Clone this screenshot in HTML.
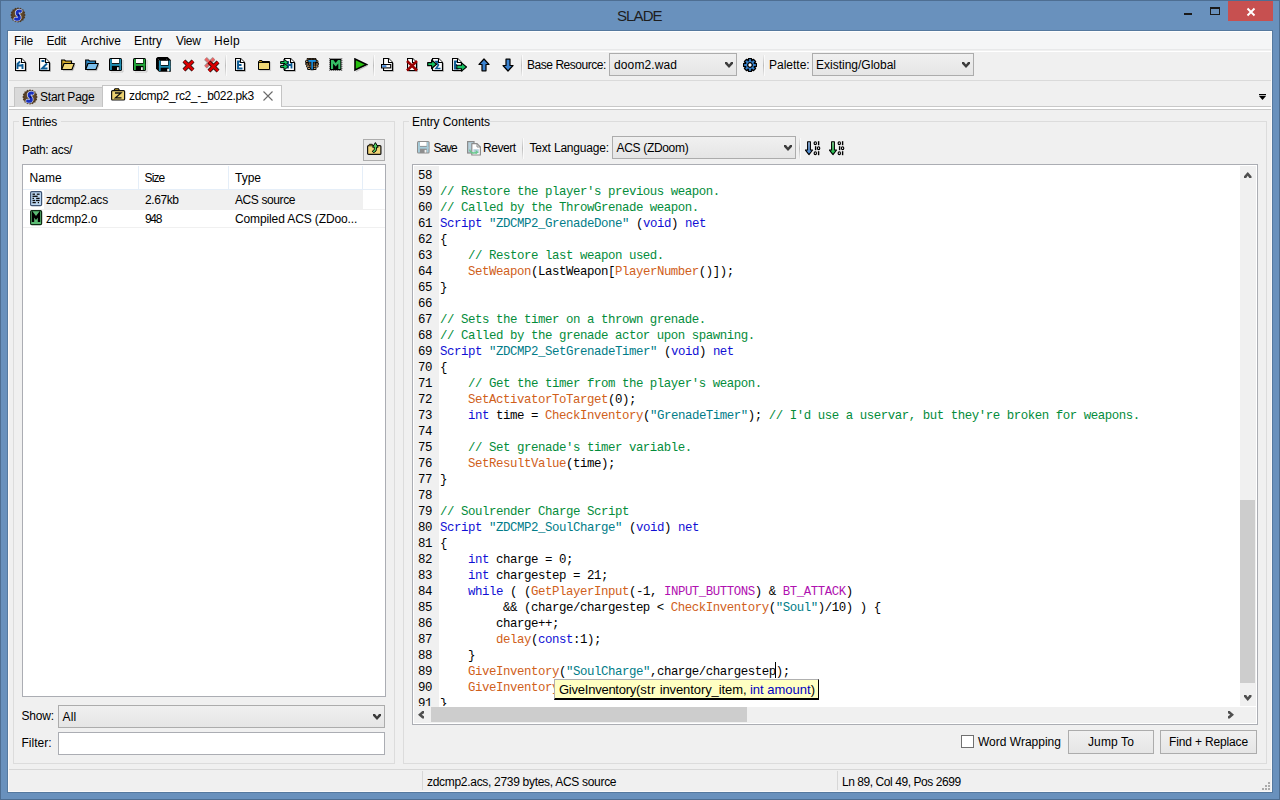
<!DOCTYPE html>
<html><head><meta charset="utf-8">
<style>
*{box-sizing:border-box;margin:0;padding:0}
html,body{width:1280px;height:800px;overflow:hidden;background:#6991BD;font-family:"Liberation Sans",sans-serif;font-size:12px;color:#000}
.a{position:absolute}
.t{position:absolute;white-space:pre;line-height:14px}
#win{position:absolute;left:0;top:0;width:1280px;height:800px;background:#6991BD;border:1px solid #4E6E92}
#client{position:absolute;left:8px;top:31px;width:1264px;height:761px;background:#F0F0F0;overflow:hidden}
.sep{position:absolute;width:1px;background:linear-gradient(rgba(190,190,190,0.1),#BDBDBD 50%,rgba(190,190,190,0.1));box-shadow:1px 0 0 #FAFAFA}
.ssep{position:absolute;width:1px;background:#D7D7D7}
.combo{position:absolute;border:1px solid #ACACAC;background:linear-gradient(#F0F0F0,#E5E5E5)}
.combo .arr{position:absolute;right:3px;top:50%;margin-top:-3px;width:8px;height:6px}
.gb{position:absolute;border:1px solid #DCDCDC}
.btn{position:absolute;border:1px solid #ACACAC;background:linear-gradient(#F0F0F0,#E5E5E5);text-align:center}
.code{position:absolute;left:440px;font-family:"Liberation Mono",monospace;font-size:12.4px;letter-spacing:-0.44px;line-height:16px;white-space:pre;margin-top:2px}
.ln{position:absolute;left:418px;font-family:"Liberation Mono",monospace;font-size:12.4px;letter-spacing:-0.44px;line-height:16px;white-space:pre;margin-top:2px}
.c{color:#038C3A}.k{color:#1010D4}.f{color:#D0601A}.s{color:#007C88}.m{color:#B010B0}
</style></head><body>
<div id="win"></div>
<!-- title -->
<div class="t" style="left:617px;top:8px;font-size:15px;line-height:16px;color:#1E1E1E;letter-spacing:-0.9px">SLADE</div>
<div class="a" style="left:1228px;top:1px;width:45px;height:20px;background:#C75050"></div>
<svg class="a" style="left:1246px;top:7px" width="10" height="10"><path d="M1.5 1.5 L8.5 8.5 M8.5 1.5 L1.5 8.5" stroke="#fff" stroke-width="1.9"/></svg>
<div class="a" style="left:1210px;top:7px;width:10px;height:8px;border:1px solid #1a1a1a;border-top-width:2px"></div>
<div class="a" style="left:1184px;top:13px;width:8px;height:2px;background:#1a1a1a"></div>

<div id="client"></div>
<!-- menubar -->
<div class="a" style="left:8px;top:31px;width:1264px;height:19px;background:#F5F6F7"></div>
<div class="a" style="left:8px;top:49px;width:1264px;height:1px;background:#E8E9EA"></div>
<div class="t" style="left:14px;top:34px;letter-spacing:-0.06px">File</div>
<div class="t" style="left:46.5px;top:34px;letter-spacing:-0.26px">Edit</div>
<div class="t" style="left:81px;top:34px">Archive</div>
<div class="t" style="left:134px;top:34px">Entry</div>
<div class="t" style="left:176px;top:34px;letter-spacing:-0.33px">View</div>
<div class="t" style="left:214px;top:34px;letter-spacing:0.33px">Help</div>
<!-- toolbar -->
<div class="a" style="left:8px;top:51px;width:1264px;height:1px;background:#FFFFFF"></div>
<div class="a" style="left:8px;top:80px;width:1264px;height:1px;background:#DADADA"></div>
<div class="sep" style="left:225px;top:55px;height:21px"></div>
<div class="sep" style="left:373px;top:55px;height:21px"></div>
<div class="sep" style="left:521px;top:55px;height:21px"></div>
<div class="sep" style="left:763px;top:55px;height:21px"></div>

<div class="t" style="left:527px;top:58px;letter-spacing:-0.46px">Base Resource:</div>
<div class="combo" style="left:609px;top:53px;width:128px;height:23px"><div class="t" style="left:4px;top:4px;letter-spacing:0.12px">doom2.wad</div><svg class="arr" viewBox="0 0 8 6"><path d="M0 0 H2 L4 2.6 L6 0 H8 V1.8 L4 6 L0 1.8 Z" fill="#3C3C3C"/></svg></div>
<div class="t" style="left:769px;top:58px">Palette:</div>
<div class="combo" style="left:812px;top:53px;width:162px;height:23px"><div class="t" style="left:3px;top:4px">Existing/Global</div><svg class="arr" viewBox="0 0 8 6"><path d="M0 0 H2 L4 2.6 L6 0 H8 V1.8 L4 6 L0 1.8 Z" fill="#3C3C3C"/></svg></div>

<!-- tabs -->
<div class="a" style="left:8px;top:106px;width:1264px;height:1px;background:#C8C8C8"></div>
<div class="a" style="left:8px;top:107px;width:1264px;height:2px;background:#FFFFFF"></div>
<div class="a" style="left:8px;top:109px;width:1264px;height:1px;background:#C8C8C8"></div>
<div class="a" style="left:14px;top:87px;width:89px;height:20px;background:#D9D9D9;border:1px solid #C4C4C4;border-bottom:none"></div>
<div class="t" style="left:40px;top:90px;letter-spacing:-0.22px">Start Page</div>
<div class="a" style="left:102px;top:85px;width:180px;height:22px;background:#FFFFFF;border:1px solid #C4C4C4;border-bottom:none"></div>
<div class="t" style="left:129px;top:89px;letter-spacing:-0.35px">zdcmp2_rc2_-_b022.pk3</div>
<svg class="a" style="left:263px;top:91px" width="10" height="10"><path d="M0.5 0.5 L9.5 9.5 M9.5 0.5 L0.5 9.5" stroke="#6A6A6A" stroke-width="1.1"/></svg>
<svg class="a" style="left:1259px;top:94px" width="7" height="6"><path d="M0 0 H7 V1.2 H0 Z M0 2 H7 L3.5 6 Z" fill="#000"/></svg>

<!-- left group -->
<div class="gb" style="left:13px;top:121px;width:382px;height:643px"></div>
<div class="a" style="left:19px;top:115px;width:42px;height:12px;background:#F0F0F0"></div>
<div class="t" style="left:22px;top:115px;letter-spacing:-0.37px">Entries</div>
<div class="t" style="left:22px;top:143px;letter-spacing:-0.33px">Path: acs/</div>
<div class="a" style="left:363px;top:139px;width:22px;height:22px;border:1px solid #ADADAD;background:#E8E8E8"></div>
<div class="a" style="left:22px;top:164px;width:364px;height:533px;border:1px solid #ABADB3;background:#fff"></div>
<div class="a" style="left:23px;top:165px;width:362px;height:25px;background:#fff;border-bottom:1px solid #E5EEF8"></div>
<div class="a" style="left:138px;top:166px;width:1px;height:23px;background:#E5EEF8"></div>
<div class="a" style="left:228px;top:166px;width:1px;height:23px;background:#E5EEF8"></div>
<div class="a" style="left:362px;top:166px;width:1px;height:23px;background:#E5EEF8"></div>
<div class="t" style="left:29.5px;top:171px;letter-spacing:0.07px">Name</div>
<div class="t" style="left:144.5px;top:171px;letter-spacing:-0.87px">Size</div>
<div class="t" style="left:235px;top:171px">Type</div>
<div class="a" style="left:44px;top:190px;width:319px;height:19px;background:#F0F0F0"></div>
<div class="a" style="left:23px;top:209px;width:362px;height:1px;background:#F0F0F0"></div>
<div class="a" style="left:23px;top:227px;width:362px;height:1px;background:#F0F0F0"></div>
<div class="t" style="left:46px;top:193px;letter-spacing:-0.21px">zdcmp2.acs</div>
<div class="t" style="left:145px;top:193px;letter-spacing:-0.42px">2.67kb</div>
<div class="t" style="left:235px;top:193px;letter-spacing:-0.4px">ACS source</div>
<div class="t" style="left:46px;top:212px;letter-spacing:-0.07px">zdcmp2.o</div>
<div class="t" style="left:145px;top:212px;letter-spacing:-1.3px">948</div>
<div class="t" style="left:235px;top:212px;letter-spacing:-0.12px">Compiled ACS (ZDoo...</div>
<div class="t" style="left:21.5px;top:709px;letter-spacing:-0.21px">Show:</div>
<div class="combo" style="left:58px;top:705px;width:327px;height:23px"><div class="t" style="left:3.5px;top:4px;letter-spacing:0.2px">All</div><svg class="arr" viewBox="0 0 8 6"><path d="M0 0 H2 L4 2.6 L6 0 H8 V1.8 L4 6 L0 1.8 Z" fill="#3C3C3C"/></svg></div>
<div class="t" style="left:21.5px;top:736px">Filter:</div>
<div class="a" style="left:58px;top:732px;width:327px;height:23px;border:1px solid #ABADB3;background:#fff"></div>

<!-- right group -->
<div class="gb" style="left:403px;top:121px;width:864px;height:643px"></div>
<div class="a" style="left:409px;top:115px;width:80px;height:12px;background:#F0F0F0"></div>
<div class="t" style="left:412px;top:115px;letter-spacing:-0.1px">Entry Contents</div>
<div class="t" style="left:433.5px;top:141px;letter-spacing:-1.07px">Save</div>
<div class="t" style="left:483px;top:141px;letter-spacing:-0.44px">Revert</div>
<div class="sep" style="left:522px;top:138px;height:21px"></div>
<div class="t" style="left:529.5px;top:141px;letter-spacing:-0.19px">Text Language:</div>
<div class="combo" style="left:612px;top:136px;width:184px;height:23px"><div class="t" style="left:3.5px;top:4px;letter-spacing:-0.32px">ACS (ZDoom)</div><svg class="arr" viewBox="0 0 8 6"><path d="M0 0 H2 L4 2.6 L6 0 H8 V1.8 L4 6 L0 1.8 Z" fill="#3C3C3C"/></svg></div>
<div class="sep" style="left:799px;top:138px;height:21px"></div>

<!-- editor -->
<div class="a" style="left:412px;top:164px;width:846px;height:561px;border:1px solid #ABADB3;background:#fff"></div>
<div class="a" style="left:414px;top:166px;width:25px;height:541px;background:#F0F0F0"></div>
<div id="code" class="a" style="left:0;top:0;width:1280px;height:706px;overflow:hidden;clip-path:inset(166px 0 0 0)">
<div class="ln" style="top:166px">58</div>
<div class="ln" style="top:182px">59</div>
<div class="code" style="top:182px"><span class="c">// Restore the player's previous weapon.</span></div>
<div class="ln" style="top:198px">60</div>
<div class="code" style="top:198px"><span class="c">// Called by the ThrowGrenade weapon.</span></div>
<div class="ln" style="top:214px">61</div>
<div class="code" style="top:214px"><span class="k">Script</span> <span class="s">"ZDCMP2_GrenadeDone"</span> (<span class="k">void</span>) <span class="k">net</span></div>
<div class="ln" style="top:230px">62</div>
<div class="code" style="top:230px">{</div>
<div class="ln" style="top:246px">63</div>
<div class="code" style="top:246px">    <span class="c">// Restore last weapon used.</span></div>
<div class="ln" style="top:262px">64</div>
<div class="code" style="top:262px">    <span class="f">SetWeapon</span>(LastWeapon[<span class="f">PlayerNumber</span>()]);</div>
<div class="ln" style="top:278px">65</div>
<div class="code" style="top:278px">}</div>
<div class="ln" style="top:294px">66</div>
<div class="ln" style="top:310px">67</div>
<div class="code" style="top:310px"><span class="c">// Sets the timer on a thrown grenade.</span></div>
<div class="ln" style="top:326px">68</div>
<div class="code" style="top:326px"><span class="c">// Called by the grenade actor upon spawning.</span></div>
<div class="ln" style="top:342px">69</div>
<div class="code" style="top:342px"><span class="k">Script</span> <span class="s">"ZDCMP2_SetGrenadeTimer"</span> (<span class="k">void</span>) <span class="k">net</span></div>
<div class="ln" style="top:358px">70</div>
<div class="code" style="top:358px">{</div>
<div class="ln" style="top:374px">71</div>
<div class="code" style="top:374px">    <span class="c">// Get the timer from the player's weapon.</span></div>
<div class="ln" style="top:390px">72</div>
<div class="code" style="top:390px">    <span class="f">SetActivatorToTarget</span>(0);</div>
<div class="ln" style="top:406px">73</div>
<div class="code" style="top:406px">    <span class="k">int</span> time = <span class="f">CheckInventory</span>(<span class="s">"GrenadeTimer"</span>); <span class="c">// I'd use a uservar, but they're broken for weapons.</span></div>
<div class="ln" style="top:422px">74</div>
<div class="ln" style="top:438px">75</div>
<div class="code" style="top:438px">    <span class="c">// Set grenade's timer variable.</span></div>
<div class="ln" style="top:454px">76</div>
<div class="code" style="top:454px">    <span class="f">SetResultValue</span>(time);</div>
<div class="ln" style="top:470px">77</div>
<div class="code" style="top:470px">}</div>
<div class="ln" style="top:486px">78</div>
<div class="ln" style="top:502px">79</div>
<div class="code" style="top:502px"><span class="c">// Soulrender Charge Script</span></div>
<div class="ln" style="top:518px">80</div>
<div class="code" style="top:518px"><span class="k">Script</span> <span class="s">"ZDCMP2_SoulCharge"</span> (<span class="k">void</span>) <span class="k">net</span></div>
<div class="ln" style="top:534px">81</div>
<div class="code" style="top:534px">{</div>
<div class="ln" style="top:550px">82</div>
<div class="code" style="top:550px">    <span class="k">int</span> charge = 0;</div>
<div class="ln" style="top:566px">83</div>
<div class="code" style="top:566px">    <span class="k">int</span> chargestep = 21;</div>
<div class="ln" style="top:582px">84</div>
<div class="code" style="top:582px">    <span class="k">while</span> ( (<span class="f">GetPlayerInput</span>(-1, <span class="m">INPUT_BUTTONS</span>) &amp; <span class="m">BT_ATTACK</span>)</div>
<div class="ln" style="top:598px">85</div>
<div class="code" style="top:598px">         &amp;&amp; (charge/chargestep &lt; <span class="f">CheckInventory</span>(<span class="s">"Soul"</span>)/10) ) {</div>
<div class="ln" style="top:614px">86</div>
<div class="code" style="top:614px">        charge++;</div>
<div class="ln" style="top:630px">87</div>
<div class="code" style="top:630px">        <span class="f">delay</span>(<span class="k">const</span>:1);</div>
<div class="ln" style="top:646px">88</div>
<div class="code" style="top:646px">    }</div>
<div class="ln" style="top:662px">89</div>
<div class="code" style="top:662px">    <span class="f">GiveInventory</span>(<span class="s">"SoulCharge"</span>,charge/chargestep);</div>
<div class="ln" style="top:678px">90</div>
<div class="code" style="top:678px">    <span class="f">GiveInventory</span>(<span class="s">"SoulCharge"</span>,charge/chargestep);</div>
<div class="ln" style="top:694px">91</div>
<div class="code" style="top:694px">}</div>
</div><!--endcode-->
<!-- scrollbars -->
<div class="a" style="left:1240px;top:166px;width:16px;height:540px;background:#F0F0F0"></div>
<div class="a" style="left:1240px;top:500px;width:15px;height:183px;background:#CDCDCD"></div>
<svg class="a" style="left:1244px;top:172px" width="7.5" height="6"><path transform="translate(0,6) scale(1,-1)" d="M0 0 H2.2 L3.75 2.3 L5.3 0 H7.5 V1.7 L3.75 6 L0 1.7 Z" fill="#4F4F4F"/></svg>
<svg class="a" style="left:1244px;top:695px" width="7.5" height="6"><path d="M0 0 H2.2 L3.75 2.3 L5.3 0 H7.5 V1.7 L3.75 6 L0 1.7 Z" fill="#4F4F4F"/></svg>
<div class="a" style="left:414px;top:707px;width:842px;height:16px;background:#F0F0F0"></div>
<div class="a" style="left:431px;top:707px;width:316px;height:15px;background:#CDCDCD"></div>
<svg class="a" style="left:418px;top:711px" width="6" height="7.5"><path transform="translate(6,0) rotate(90)" d="M0 0 H2.2 L3.75 2.3 L5.3 0 H7.5 V1.7 L3.75 6 L0 1.7 Z" fill="#4F4F4F"/></svg>
<svg class="a" style="left:1228px;top:711px" width="6" height="7.5"><path transform="translate(0,7.5) rotate(-90)" d="M0 0 H2.2 L3.75 2.3 L5.3 0 H7.5 V1.7 L3.75 6 L0 1.7 Z" fill="#4F4F4F"/></svg>

<!-- bottom right -->
<div class="a" style="left:961px;top:735px;width:13px;height:13px;border:1px solid #707070;background:#fff"></div>
<div class="t" style="left:978px;top:735px">Word Wrapping</div>
<div class="btn" style="left:1068px;top:730px;width:86px;height:24px"><div class="t" style="left:0;width:84px;top:4px;text-align:center;letter-spacing:0.15px">Jump To</div></div>
<div class="btn" style="left:1160px;top:730px;width:97px;height:24px"><div class="t" style="left:0;width:95px;top:4px;text-align:center;letter-spacing:-0.15px">Find + Replace</div></div>

<!-- status -->
<div class="a" style="left:8px;top:769px;width:1264px;height:1px;background:#D7D7D7"></div>
<div class="ssep" style="left:422px;top:771px;height:19px"></div>
<div class="ssep" style="left:837px;top:771px;height:19px"></div>
<div class="t" style="left:427px;top:775px;letter-spacing:-0.3px">zdcmp2.acs, 2739 bytes, ACS source</div>
<div class="t" style="left:842px;top:775px;letter-spacing:-0.44px">Ln 89, Col 49, Pos 2699</div>
<svg class="a" style="left:1262px;top:782px" width="9" height="9"><rect x="6" y="0" width="2" height="2" fill="#ABABAB"/><rect x="3" y="3" width="2" height="2" fill="#ABABAB"/><rect x="6" y="3" width="2" height="2" fill="#ABABAB"/><rect x="0" y="6" width="2" height="2" fill="#ABABAB"/><rect x="3" y="6" width="2" height="2" fill="#ABABAB"/><rect x="6" y="6" width="2" height="2" fill="#ABABAB"/></svg>
<div class="a" style="left:7px;top:30px;width:1266px;height:763px;border:1px solid #55799F"></div>
<div class="a" style="left:8px;top:31px;width:1264px;height:761px;border:1px solid #F9F9F9;border-top-color:#FFFFFF"></div>
<!--tip-->
<div class="a" style="left:775px;top:662px;width:1px;height:16px;background:#000"></div>
<div class="a" style="left:554px;top:679px;width:265px;height:21px;background:#FFFFC2;border-top:1px solid #B0B0B0;border-left:1px solid #B0B0B0;border-right:1px solid #000;border-bottom:2px solid #000"></div>
<div class="t" id="tiptext" style="left:559px;top:682px;font-size:13px;line-height:15px"><span style="letter-spacing:-0.24px">GiveInventory(</span><span style="letter-spacing:0.35px">str </span><span style="letter-spacing:-0.09px">inventory_item, </span><span style="color:#0000C0">int amount</span>)</div>
<!--endtip-->
<!--icons-->
<svg class="a" style="left:15px;top:58px" width="13" height="15" viewBox="0 0 13 15" ><path d="M1.5 13.5 H11.5 V5" stroke="#9a9a9a" stroke-opacity="0.6" fill="none"/><path d="M0.5 0.5 H6.5 L10.5 4.5 V12.5 H0.5 Z" fill="#fff" stroke="#000" stroke-width="1.2"/><path d="M2.5 11 V6 L5 3.5 M2.5 7.5 H7.5 M7.5 6 V11" stroke="#0B5B95" stroke-width="1.9" fill="none"/><path d="M6.5 0.5 V4.5 H10.5" fill="#fff" stroke="#000" stroke-width="1.1"/></svg>
<svg class="a" style="left:39px;top:58px" width="13" height="15" viewBox="0 0 13 15" ><path d="M1.5 13.5 H11.5 V5" stroke="#9a9a9a" stroke-opacity="0.6" fill="none"/><path d="M0.5 0.5 H6.5 L10.5 4.5 V12.5 H0.5 Z" fill="#fff" stroke="#000" stroke-width="1.2"/><path d="M2.5 3 H5.5 M8 5.5 L3 10.5 H8.5" stroke="#0B5B95" stroke-width="1.9" fill="none"/><path d="M6.5 0.5 V4.5 H10.5" fill="#fff" stroke="#000" stroke-width="1.1"/></svg>
<svg class="a" style="left:61px;top:59px" width="15" height="13" viewBox="0 0 15 13" ><path d="M0.7 10.5 V1 H3.5 L4.5 2 H10.5 V4" fill="#D4AC2A" stroke="#000" stroke-width="1.2"/><path d="M0.7 10.5 L3 4.5 H13.3 L11 10.5 Z" fill="#F2D878" stroke="#000" stroke-width="1.2" stroke-linejoin="round"/><path d="M2 11.6 H11.8 L14 6" stroke="#888" stroke-opacity="0.5" fill="none"/></svg>
<svg class="a" style="left:85px;top:59px" width="15" height="13" viewBox="0 0 15 13" ><path d="M0.7 10.5 V1 H3.5 L4.5 2 H10.5 V4" fill="#2E8CCB" stroke="#000" stroke-width="1.2"/><path d="M0.7 10.5 L3 4.5 H13.3 L11 10.5 Z" fill="#7CC0EE" stroke="#000" stroke-width="1.2" stroke-linejoin="round"/><path d="M2 11.6 H11.8 L14 6" stroke="#888" stroke-opacity="0.5" fill="none"/></svg>
<svg class="a" style="left:109px;top:58px" width="15" height="15" viewBox="0 0 15 15" ><path d="M2 14 H14 V2" stroke="#888" stroke-opacity="0.35" fill="none"/><rect x="0" y="0" width="13" height="13" rx="1.6" fill="#000"/><rect x="1" y="1" width="1.9" height="11" rx="0.6" fill="#1E8CB0"/><rect x="10.4" y="1" width="1.8" height="11" rx="0.6" fill="#1E8CB0"/><rect x="1" y="6" width="11.2" height="1.9" fill="#1E8CB0"/><rect x="3" y="1" width="7" height="4.1" fill="#fff"/><rect x="8" y="9.2" width="1.8" height="2.8" fill="#eee"/></svg>
<svg class="a" style="left:133px;top:58px" width="15" height="15" viewBox="0 0 15 15" ><path d="M2 14 H14 V2" stroke="#888" stroke-opacity="0.35" fill="none"/><rect x="0" y="0" width="13" height="13" rx="1.6" fill="#000"/><rect x="1" y="1" width="1.9" height="11" rx="0.6" fill="#22A83A"/><rect x="10.4" y="1" width="1.8" height="11" rx="0.6" fill="#22A83A"/><rect x="1" y="6" width="11.2" height="1.9" fill="#22A83A"/><rect x="3" y="1" width="7" height="4.1" fill="#fff"/><rect x="8" y="9.2" width="1.8" height="2.8" fill="#eee"/></svg>
<svg class="a" style="left:156px;top:57px" width="16" height="16" viewBox="0 0 16 16" ><path d="M0 1.6 L1.6 0 H11.6 L14.8 3 V14.7 H3 L0 11.8 Z" fill="#000"/><rect x="2.9" y="3.6" width="1.8" height="10.3" rx="0.6" fill="#1E8CB0"/><rect x="12.6" y="3.6" width="1.7" height="10.3" rx="0.6" fill="#1E8CB0"/><rect x="2.9" y="8.8" width="11.4" height="1.9" fill="#1E8CB0"/><rect x="5" y="3.8" width="7" height="4.2" fill="#fff"/><rect x="11.2" y="11.8" width="1.9" height="2.6" fill="#eee"/><path d="M2 2.2 L3.6 3.6 M10.4 2.2 L12 3.6" stroke="#999" stroke-width="0.7" stroke-dasharray="0.8 0.8"/></svg>
<svg class="a" style="left:182px;top:59px" width="13" height="13" viewBox="0 0 13 13" ><path d="M2 2 L11 11 M11 2 L2 11" stroke="#000" stroke-width="4.2" stroke-opacity="0.9"/><path d="M2 2 L11 11 M11 2 L2 11" stroke="#D80000" stroke-width="2.6" stroke-opacity="1"/></svg>
<svg class="a" style="left:204px;top:57px" width="16" height="16" viewBox="0 0 16 16" ><path d="M1.5 1.5 L10 10 M10 1.5 L1.5 10" stroke="#000" stroke-opacity="0.35" stroke-width="4"/><path d="M1.5 1.5 L10 10 M10 1.5 L1.5 10" stroke="#E86464" stroke-width="2.6"/><g transform="translate(3,3)"><path d="M2 2 L11 11 M11 2 L2 11" stroke="#000" stroke-width="4.2" stroke-opacity="0.9"/><path d="M2 2 L11 11 M11 2 L2 11" stroke="#D80000" stroke-width="2.6" stroke-opacity="1"/></g></svg>
<svg class="a" style="left:235px;top:58px" width="12" height="15" viewBox="0 0 12 15" ><path d="M1.5 13.5 H10.5 V5" stroke="#9a9a9a" stroke-opacity="0.6" fill="none"/><path d="M0.5 0.5 H5.5 L9.5 4.5 V12.5 H0.5 Z" fill="#fff" stroke="#000" stroke-width="1.2"/><path d="M7 3.5 H3 V10.5 H7.5 M3 7 H6.5" stroke="#0B5B95" stroke-width="1.9" fill="none"/><path d="M5.5 0.5 V4.5 H9.5" fill="#fff" stroke="#000" stroke-width="1.1"/></svg>
<svg class="a" style="left:258px;top:60px" width="14" height="12" viewBox="0 0 14 12" ><rect x="0" y="1" width="12" height="9" rx="0.8" fill="#000"/><rect x="1" y="0" width="3.2" height="2" rx="0.6" fill="#000"/><rect x="1.2" y="1.1" width="2.6" height="1" fill="#C8A020"/><rect x="1" y="3" width="10" height="6" fill="#EDD676"/><path d="M1.5 10.6 H12.6 V2" stroke="#888" stroke-opacity="0.35" fill="none"/></svg>
<svg class="a" style="left:284px;top:58px" width="13" height="15" viewBox="0 0 13 15" ><path d="M1.5 13.5 H11.5 V5" stroke="#9a9a9a" stroke-opacity="0.6" fill="none"/><path d="M0.5 0.5 H6.5 L10.5 4.5 V12.5 H0.5 Z" fill="#fff" stroke="#000" stroke-width="1.2"/><path d="M4 3 V10.5 M7.5 4 V10.5 M4.5 7 H7" stroke="#0B5B95" stroke-width="1.8" fill="none"/><path d="M6.5 0.5 V4.5 H10.5" fill="#fff" stroke="#000" stroke-width="1.1"/></svg>
<svg class="a" style="left:280px;top:58px" width="10" height="13" viewBox="0 0 10 13" ><path d="M0.6 3.6 H4 V1 L8.2 4.6 L4 8.2 V5.6 H0.6 Z" fill="#12C860" stroke="#000" stroke-width="1" stroke-linejoin="round"/><path d="M0.6 7.6 H4 V5 L8.2 8.6 L4 12.2 V9.6 H0.6 Z" fill="#12C860" stroke="#000" stroke-width="1" stroke-linejoin="round"/></svg>
<svg class="a" style="left:305px;top:58px" width="14" height="13" viewBox="0 0 14 13" ><rect x="1.6" y="0.0" width="3.8" height="2.6" rx="1" fill="#000"/><rect x="4.6" y="0.0" width="3.8" height="2.6" rx="1" fill="#000"/><rect x="7.6" y="0.0" width="3.8" height="2.6" rx="1" fill="#000"/><rect x="0.1" y="2.3" width="3.8" height="2.6" rx="1" fill="#000"/><rect x="9.6" y="2.3" width="3.8" height="2.6" rx="1" fill="#000"/><rect x="0.3" y="4.6" width="3.8" height="2.6" rx="1" fill="#000"/><rect x="3.1" y="4.6" width="3.8" height="2.6" rx="1" fill="#000"/><rect x="7.1" y="4.6" width="3.8" height="2.6" rx="1" fill="#000"/><rect x="10.1" y="4.6" width="3.8" height="2.6" rx="1" fill="#000"/><rect x="1.1" y="6.9" width="3.8" height="2.6" rx="1" fill="#000"/><rect x="3.7" y="6.9" width="3.8" height="2.6" rx="1" fill="#000"/><rect x="7.1" y="6.9" width="3.8" height="2.6" rx="1" fill="#000"/><rect x="9.7" y="6.9" width="3.8" height="2.6" rx="1" fill="#000"/><rect x="2.1" y="9.3" width="3.8" height="2.6" rx="1" fill="#000"/><rect x="7.7" y="9.3" width="3.8" height="2.6" rx="1" fill="#000"/><rect x="2.4" y="0.8" width="2.2" height="1.1" rx="0.5" fill="#D2A46C"/><rect x="5.4" y="0.8" width="2.2" height="1.1" rx="0.5" fill="#D2A46C"/><rect x="8.4" y="0.8" width="2.2" height="1.1" rx="0.5" fill="#D2A46C"/><rect x="0.9" y="3.0" width="2.2" height="1.1" rx="0.5" fill="#D2A46C"/><rect x="10.4" y="3.0" width="2.2" height="1.1" rx="0.5" fill="#D2A46C"/><rect x="1.1" y="5.4" width="2.2" height="1.1" rx="0.5" fill="#D2A46C"/><rect x="3.9" y="5.4" width="2.2" height="1.1" rx="0.5" fill="#D2A46C"/><rect x="7.9" y="5.4" width="2.2" height="1.1" rx="0.5" fill="#D2A46C"/><rect x="10.9" y="5.4" width="2.2" height="1.1" rx="0.5" fill="#D2A46C"/><rect x="1.9" y="7.6" width="2.2" height="1.1" rx="0.5" fill="#D2A46C"/><rect x="4.5" y="7.6" width="2.2" height="1.1" rx="0.5" fill="#D2A46C"/><rect x="7.9" y="7.6" width="2.2" height="1.1" rx="0.5" fill="#D2A46C"/><rect x="10.5" y="7.6" width="2.2" height="1.1" rx="0.5" fill="#D2A46C"/><rect x="2.9" y="10.0" width="2.2" height="1.1" rx="0.5" fill="#D2A46C"/><rect x="8.5" y="10.0" width="2.2" height="1.1" rx="0.5" fill="#D2A46C"/><path d="M2.6 1.2 H11.6 V4.6 H8.6 V12.2 H5.6 V4.6 H2.6 Z" fill="#000"/><rect x="3.4" y="2" width="7.4" height="1.9" fill="#1A90E0"/><rect x="6.3" y="2" width="1.6" height="9.4" fill="#1A90E0"/></svg>
<svg class="a" style="left:329px;top:58px" width="14" height="14" viewBox="0 0 14 14" ><rect x="0.5" y="0.5" width="12.4" height="12" fill="none" stroke="#444" stroke-dasharray="1 1" stroke-width="1"/><rect x="1" y="1" width="11.4" height="11" fill="#000"/><path d="M2 11 V2 H4.4 L6.7 5 L9 2 H11.4 V11 H9.3 V5.6 L6.7 8.4 L4.1 5.6 V11 Z" fill="#36BC64"/></svg>
<svg class="a" style="left:354px;top:58px" width="15" height="14" viewBox="0 0 15 14" ><path d="M1 1 L12.5 6.5 L1 12 Z" fill="#28C010" stroke="#000" stroke-width="1.6" stroke-linejoin="miter"/><path d="M2 13.5 L14 7.3" stroke="#888" stroke-opacity="0.5"/></svg>
<svg class="a" style="left:383px;top:58px" width="12" height="15" viewBox="0 0 12 15" ><path d="M1.5 13.5 H10.5 V5" stroke="#9a9a9a" stroke-opacity="0.6" fill="none"/><path d="M0.5 0.5 H5.5 L9.5 4.5 V12.5 H0.5 Z" fill="#fff" stroke="#000" stroke-width="1.2"/><path d="M5.5 0.5 V4.5 H9.5" fill="#fff" stroke="#000" stroke-width="1.1"/></svg>
<svg class="a" style="left:381px;top:64px" width="11" height="5" viewBox="0 0 11 5" ><rect x="0.5" y="0.5" width="9.2" height="3.4" fill="#fff" stroke="#000" stroke-width="1.1"/><rect x="1.2" y="1.2" width="4.2" height="2" fill="#3F86D8"/></svg>
<svg class="a" style="left:407px;top:58px" width="12" height="15" viewBox="0 0 12 15" ><path d="M1.5 13.5 H10.5 V5" stroke="#9a9a9a" stroke-opacity="0.6" fill="none"/><path d="M0.5 0.5 H5.5 L9.5 4.5 V12.5 H0.5 Z" fill="#fff" stroke="#000" stroke-width="1.2"/><path d="M5.5 0.5 V4.5 H9.5" fill="#fff" stroke="#000" stroke-width="1.1"/></svg>
<svg class="a" style="left:405px;top:59px" width="14" height="13" viewBox="0 0 14 13" ><path d="M2 2 L12 11.5 M12 2 L2 11.5" stroke="#9A0000" stroke-width="2.6"/></svg>
<svg class="a" style="left:432px;top:58px" width="13" height="15" viewBox="0 0 13 15" ><path d="M1.5 13.5 H11.5 V5" stroke="#9a9a9a" stroke-opacity="0.6" fill="none"/><path d="M0.5 0.5 H6.5 L10.5 4.5 V12.5 H0.5 Z" fill="#fff" stroke="#000" stroke-width="1.2"/><path d="M8 3.5 H4 L6.5 7 L4 10.5 H8.5" stroke="#0B5B95" stroke-width="1.6" fill="none"/><path d="M6.5 0.5 V4.5 H10.5" fill="#fff" stroke="#000" stroke-width="1.1"/></svg>
<svg class="a" style="left:427px;top:59px" width="11" height="11" viewBox="0 0 11 11" ><path d="M0.7 3.7 H4.6 V0.9 L9.6 5.2 L4.6 9.5 V6.7 H0.7 Z" fill="#12C460" stroke="#000" stroke-width="1.2" stroke-linejoin="round"/></svg>
<svg class="a" style="left:452px;top:58px" width="12" height="15" viewBox="0 0 12 15" ><path d="M1.5 13.5 H10.5 V5" stroke="#9a9a9a" stroke-opacity="0.6" fill="none"/><path d="M0.5 0.5 H5.5 L9.5 4.5 V12.5 H0.5 Z" fill="#fff" stroke="#000" stroke-width="1.2"/><path d="M6.5 3.5 H3 V10.5 H6.5 M3 7 H5" stroke="#0B5B95" stroke-width="1.9" fill="none"/><path d="M5.5 0.5 V4.5 H9.5" fill="#fff" stroke="#000" stroke-width="1.1"/></svg>
<svg class="a" style="left:456px;top:62px" width="12" height="10" viewBox="0 0 12 10" ><path d="M0.8 3.3 H5.5 V0.8 L10.5 5 L5.5 9.2 V6.7 H0.8 Z" fill="#12C060" stroke="#000" stroke-width="1.1" stroke-linejoin="round"/></svg>
<svg class="a" style="left:478px;top:58px" width="12" height="14" viewBox="0 0 12 14" ><path d="M6 1 L11 6.5 H8 V12.8 H4 V6.5 H1 Z" fill="#3A82D0" stroke="#000" stroke-width="1.2" stroke-linejoin="round"/></svg>
<svg class="a" style="left:502px;top:58px" width="12" height="14" viewBox="0 0 12 14" ><path d="M6 13 L11 7.5 H8 V1.2 H4 V7.5 H1 Z" fill="#3A82D0" stroke="#000" stroke-width="1.2" stroke-linejoin="round"/></svg>
<svg class="a" style="left:743px;top:58px" width="14" height="14" viewBox="0 0 14 14" ><g transform="translate(7,7)"><path d="M6.44 -1.44 L6.44 1.44 L4.14 2.00 L4.34 1.51 L5.57 3.54 L3.54 5.57 L1.51 4.34 L2.00 4.14 L1.44 6.44 L-1.44 6.44 L-2.00 4.14 L-1.51 4.34 L-3.54 5.57 L-5.57 3.54 L-4.34 1.51 L-4.14 2.00 L-6.44 1.44 L-6.44 -1.44 L-4.14 -2.00 L-4.34 -1.51 L-5.57 -3.54 L-3.54 -5.57 L-1.51 -4.34 L-2.00 -4.14 L-1.44 -6.44 L1.44 -6.44 L2.00 -4.14 L1.51 -4.34 L3.54 -5.57 L5.57 -3.54 L4.34 -1.51 L4.14 -2.00 Z" fill="#3A86D2" stroke="#000" stroke-width="1.3" stroke-linejoin="round"/><circle r="2.3" fill="#fff" stroke="#000" stroke-width="1.3"/></g></svg>
<svg class="a" style="left:10px;top:7px" width="16" height="16" viewBox="0 0 16 16" ><g transform="scale(1.0)"><path d="M15.80 8.00 L14.47 9.29 L15.21 10.98 L13.49 11.67 L13.52 13.52 L11.67 13.49 L10.98 15.21 L9.29 14.47 L8.00 15.80 L6.71 14.47 L5.02 15.21 L4.33 13.49 L2.48 13.52 L2.51 11.67 L0.79 10.98 L1.53 9.29 L0.20 8.00 L1.53 6.71 L0.79 5.02 L2.51 4.33 L2.48 2.48 L4.33 2.51 L5.02 0.79 L6.71 1.53 L8.00 0.20 L9.29 1.53 L10.98 0.79 L11.67 2.51 L13.52 2.48 L13.49 4.33 L15.21 5.02 L14.47 6.71 Z" fill="#4E3820"/><circle cx="8" cy="8" r="5.8" fill="#5E4628"/><path d="M10.4 4.2 C8.6 3.4 6.6 4.4 7.2 6.6 C7.7 8.2 9.9 8.8 9.4 10.8 C9 12.4 7.2 12.6 5.6 12" stroke="#D8DCE8" stroke-width="4.4" fill="none" stroke-linecap="round"/><path d="M10.4 4.2 C8.6 3.4 6.6 4.4 7.2 6.6 C7.7 8.2 9.9 8.8 9.4 10.8 C9 12.4 7.2 12.6 5.6 12" stroke="#1830C0" stroke-width="3" fill="none" stroke-linecap="round"/><path d="M8 6.6 L8.8 9" stroke="#0A1460" stroke-width="1.2"/></g></svg>
<svg class="a" style="left:22px;top:89px" width="16" height="16" viewBox="0 0 16 16" ><g transform="scale(1.0)"><path d="M15.80 8.00 L14.47 9.29 L15.21 10.98 L13.49 11.67 L13.52 13.52 L11.67 13.49 L10.98 15.21 L9.29 14.47 L8.00 15.80 L6.71 14.47 L5.02 15.21 L4.33 13.49 L2.48 13.52 L2.51 11.67 L0.79 10.98 L1.53 9.29 L0.20 8.00 L1.53 6.71 L0.79 5.02 L2.51 4.33 L2.48 2.48 L4.33 2.51 L5.02 0.79 L6.71 1.53 L8.00 0.20 L9.29 1.53 L10.98 0.79 L11.67 2.51 L13.52 2.48 L13.49 4.33 L15.21 5.02 L14.47 6.71 Z" fill="#4E3820"/><circle cx="8" cy="8" r="5.8" fill="#5E4628"/><path d="M10.4 4.2 C8.6 3.4 6.6 4.4 7.2 6.6 C7.7 8.2 9.9 8.8 9.4 10.8 C9 12.4 7.2 12.6 5.6 12" stroke="#D8DCE8" stroke-width="4.4" fill="none" stroke-linecap="round"/><path d="M10.4 4.2 C8.6 3.4 6.6 4.4 7.2 6.6 C7.7 8.2 9.9 8.8 9.4 10.8 C9 12.4 7.2 12.6 5.6 12" stroke="#1830C0" stroke-width="3" fill="none" stroke-linecap="round"/><path d="M8 6.6 L8.8 9" stroke="#0A1460" stroke-width="1.2"/></g></svg>
<svg class="a" style="left:111px;top:88px" width="15" height="13" viewBox="0 0 15 13" ><path d="M3 2.5 L4 0.8 H7.5 L8.5 2.5" fill="#C8A020" stroke="#000" stroke-width="1.1"/><rect x="0.6" y="2.6" width="13" height="9.4" rx="1" fill="#EAD070" stroke="#111" stroke-width="1.2"/><path d="M4 5 H10 L4.5 9.8 H10.5" stroke="#111" stroke-width="1.3" fill="none"/></svg>
<svg class="a" style="left:30px;top:191px" width="13" height="16" viewBox="0 0 13 16" ><rect x="0.6" y="0.6" width="11" height="14" rx="1.2" fill="#BCD6F0" stroke="#3E5474" stroke-width="1.2"/><path d="M2.5 3.2 H5" stroke="#0A0A0A" stroke-width="1.3"/><path d="M6.8 3.2 H9.6" stroke="#0A0A0A" stroke-width="1.3"/><path d="M2.5 5.3 H7.6" stroke="#0A0A0A" stroke-width="1.3"/><path d="M2.5 7.4 H4" stroke="#0A0A0A" stroke-width="1.3"/><path d="M6.2 7.4 H9.6" stroke="#0A0A0A" stroke-width="1.3"/><path d="M2.5 9.5 H5" stroke="#0A0A0A" stroke-width="1.3"/><path d="M5.8 9.5 H9.6" stroke="#0A0A0A" stroke-width="1.3"/><path d="M2.5 11.6 H5.8" stroke="#0A0A0A" stroke-width="1.3"/><path d="M7.8 11.6 H9" stroke="#0A0A0A" stroke-width="1.3"/></svg>
<svg class="a" style="left:30px;top:210px" width="13" height="16" viewBox="0 0 13 16" ><rect x="0.6" y="0.6" width="11" height="14" rx="1.2" fill="#5CBC74" stroke="#0E2A14" stroke-width="1.2"/><path d="M3 12 V4 L6 8 L9 4 V12" stroke="#000" stroke-width="2.4" fill="none"/></svg>
<svg class="a" style="left:367px;top:142px" width="15" height="14" viewBox="0 0 15 14" ><rect x="0.6" y="3.6" width="13.3" height="8.8" rx="1" fill="#F0D478" stroke="#111" stroke-width="1.2"/><path d="M1.6 3.6 L2.4 2.3 H5.3 L5.8 3.6" fill="#D4AC2A" stroke="#111" stroke-width="1"/><path d="M5.2 9.2 C7 8.8 7.6 7.6 7.3 5.2 H5.6 L8.4 0.6 L11.2 5.2 H9.6 C9.9 8.6 8.6 10.2 6.4 10.6 Z" fill="#50D060" stroke="#000" stroke-width="1" stroke-linejoin="round"/></svg>
<svg class="a" style="left:417px;top:141px" width="14" height="14" viewBox="0 0 14 14" ><rect x="0" y="0" width="12.6" height="12.6" rx="1.5" fill="#8E8E8E"/><rect x="1" y="1" width="1.9" height="10.6" rx="0.6" fill="#A6CCDA"/><rect x="9.8" y="1" width="1.8" height="10.6" rx="0.6" fill="#A6CCDA"/><rect x="1" y="5.8" width="10.6" height="1.9" fill="#A6CCDA"/><rect x="3" y="1" width="6.6" height="3.9" fill="#fff"/><rect x="7.6" y="8.9" width="1.8" height="2.7" fill="#f4f4f4"/></svg>
<svg class="a" style="left:467px;top:141px" width="15" height="15" viewBox="0 0 15 15" ><rect x="0.6" y="0.6" width="6.4" height="11.4" fill="#B6D0DC" stroke="#8C8C8C" stroke-width="1.2"/><path d="M4.8 2.6 H10 L13.4 6 V14 H4.8 Z" fill="#fff" stroke="#8c8c8c" stroke-width="1.2" stroke-linejoin="round"/><path d="M10 2.6 V6 H13.4" fill="none" stroke="#8c8c8c" stroke-width="1"/><rect x="6.4" y="8.2" width="5.4" height="4" fill="#B6D0DC"/><path d="M2.6 8.6 C3.2 12 6.5 12.6 9.6 11.4" stroke="#68C88A" stroke-width="1.4" fill="none"/><path d="M8.6 9.6 L10.6 11.2 L8.6 12.8" stroke="#68C88A" stroke-width="1.2" fill="none"/></svg>
<svg class="a" style="left:805px;top:141px" width="16" height="15" viewBox="0 0 16 15" ><defs><linearGradient id="g805" x1="0" y1="0" x2="0" y2="1"><stop offset="0" stop-color="#A0C0E8"/><stop offset="1" stop-color="#3A80D0"/></linearGradient></defs><path d="M2.6 0.7 H5.4 V9 H7.6 L4 13.6 L0.4 9 H2.6 Z" fill="url(#g805)" stroke="#000" stroke-width="1.1" stroke-linejoin="round"/><ellipse cx="10.3" cy="2.2" rx="1.15" ry="1.45" fill="none" stroke="#000" stroke-width="1.2"/><path d="M13.6 0.20000000000000018 V4.2" stroke="#000" stroke-width="1.4"/><path d="M10.6 5.2 V9.2" stroke="#000" stroke-width="1.4"/><ellipse cx="13.6" cy="7.2" rx="1.15" ry="1.45" fill="none" stroke="#000" stroke-width="1.2"/><ellipse cx="10.3" cy="12.2" rx="1.15" ry="1.45" fill="none" stroke="#000" stroke-width="1.2"/><path d="M13.6 10.2 V14.2" stroke="#000" stroke-width="1.4"/></svg>
<svg class="a" style="left:829px;top:141px" width="16" height="15" viewBox="0 0 16 15" ><defs><linearGradient id="g829" x1="0" y1="0" x2="0" y2="1"><stop offset="0" stop-color="#90E0A0"/><stop offset="1" stop-color="#10B840"/></linearGradient></defs><path d="M2.6 0.7 H5.4 V9 H7.6 L4 13.6 L0.4 9 H2.6 Z" fill="url(#g829)" stroke="#000" stroke-width="1.1" stroke-linejoin="round"/><ellipse cx="10.3" cy="2.2" rx="1.15" ry="1.45" fill="none" stroke="#000" stroke-width="1.2"/><path d="M13.6 0.20000000000000018 V4.2" stroke="#000" stroke-width="1.4"/><path d="M10.6 5.2 V9.2" stroke="#000" stroke-width="1.4"/><ellipse cx="13.6" cy="7.2" rx="1.15" ry="1.45" fill="none" stroke="#000" stroke-width="1.2"/><ellipse cx="10.3" cy="12.2" rx="1.15" ry="1.45" fill="none" stroke="#000" stroke-width="1.2"/><path d="M13.6 10.2 V14.2" stroke="#000" stroke-width="1.4"/></svg>
<!--endicons-->
</body></html>
